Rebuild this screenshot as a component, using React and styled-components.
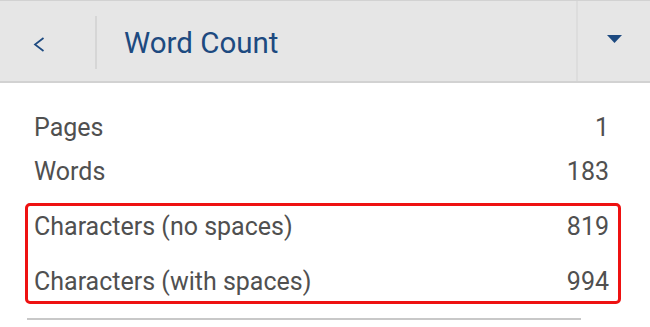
import React from 'react';
import styled, { createGlobalStyle } from 'styled-components';

const GlobalStyle = createGlobalStyle`
  html, body {
    margin: 0;
    padding: 0;
    background: #ffffff;
  }
  body {
    font-family: Roboto, "Noto Sans", sans-serif;
  }
`;

const colors = {
  header: '#e6e6e6',
  headerLine: '#d2d2d2',
  blue: '#1d4a80',
  text: '#505050',
  annotate: '#ee1111',
  rule: '#c8c8c8',
};

const Page = styled.div`
  width: 650px;
  height: 327px;
  overflow: hidden;
  background: #fff;
`;

const Header = styled.header`
  display: flex;
  align-items: stretch;
  height: 80px;
  background: ${colors.header};
  border-top: 1px solid ${colors.headerLine};
  border-bottom: 2px solid ${colors.headerLine};
`;

const BackButton = styled.button`
  width: 95px;
  border: 0;
  padding: 6px 0 0 33px;
  background: transparent;
  display: flex;
  align-items: center;
  justify-content: flex-start;
  color: ${colors.blue};
  cursor: pointer;
`;

const Divider = styled.div`
  width: 2px;
  align-self: center;
  height: 53px;
  margin-top: 3px;
  background: #d6d6d6;
`;

const Title = styled.h1`
  flex: 1;
  margin: 0;
  padding: 4px 0 0 27px;
  display: flex;
  align-items: center;
  font-size: 29.5px;
  font-weight: 400;
  color: ${colors.blue};
`;

const MenuButton = styled.button`
  width: 74px;
  border: 0;
  border-left: 2px solid #dddddd;
  background: transparent;
  display: flex;
  align-items: center;
  justify-content: center;
  padding: 0 0 4px 0;
  cursor: pointer;
`;

const Body = styled.section`
  padding: 22px 41px 0 34px;
`;

const Row = styled.div`
  display: flex;
  justify-content: space-between;
  align-items: center;
  height: ${(p) => p.$h || 44}px;
  font-size: 25px;
  color: ${colors.text};
`;

const Highlight = styled.div`
  display: flex;
  flex-direction: column;
  gap: 15px;
  margin: 10px -12px 0 -9px;
  padding: 0 9px 0 6px;
  border: 3px solid ${colors.annotate};
  border-radius: 5px;
`;

const Rule = styled.hr`
  margin: 14px 28px 0 -7px;
  border: 0;
  height: 2px;
  background: ${colors.rule};
`;

const stats = [
  { label: 'Pages', value: 1 },
  { label: 'Words', value: 183 },
];

const chars = [
  { label: 'Characters (no spaces)', value: 819 },
  { label: 'Characters (with spaces)', value: 994 },
];

const App = () => (
  <Page>
    <GlobalStyle />
    <Header>
      <BackButton aria-label="Back">
        <svg width="12" height="15" viewBox="0 0 12 15">
          <path d="M10.5 1 L2 7.5 L10.5 14" fill="none" stroke="currentColor" strokeWidth="1.7" />
        </svg>
      </BackButton>
      <Divider />
      <Title>Word Count</Title>
      <MenuButton aria-label="More">
        <svg width="15" height="8" viewBox="0 0 15 8">
          <path d="M0 0 H15 L7.5 8 Z" fill={colors.blue} />
        </svg>
      </MenuButton>
    </Header>
    <Body>
      {stats.map((s) => (
        <Row key={s.label}>
          <span>{s.label}</span>
          <span>{s.value}</span>
        </Row>
      ))}
      <Highlight>
        {chars.map((s) => (
          <Row key={s.label} $h={40}>
            <span>{s.label}</span>
            <span>{s.value}</span>
          </Row>
        ))}
      </Highlight>
      <Rule />
    </Body>
  </Page>
);

export default App;
